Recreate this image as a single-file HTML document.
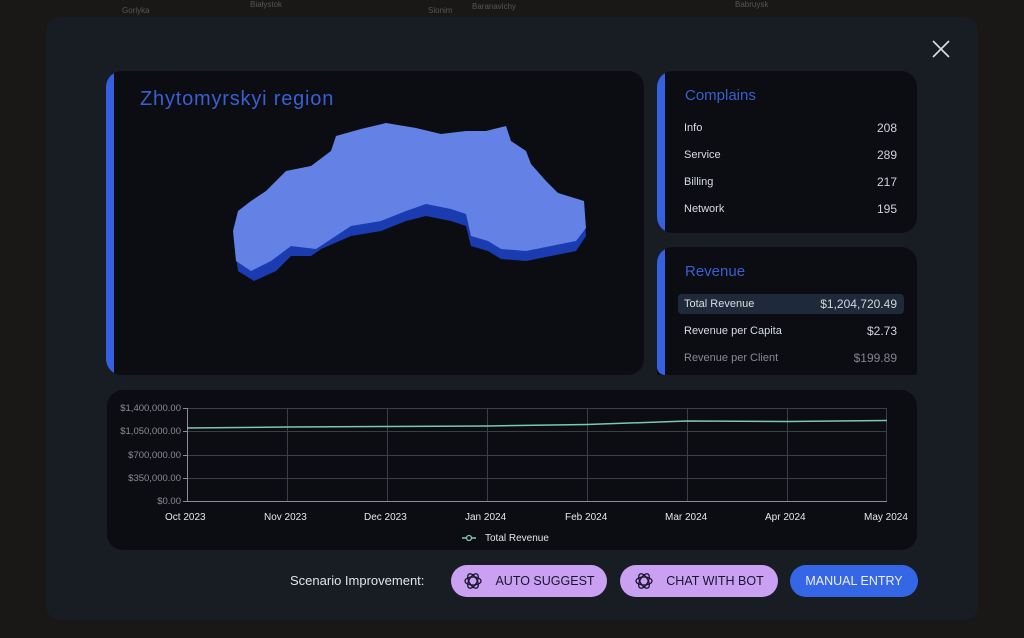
<!DOCTYPE html>
<html><head><meta charset="utf-8"><style>
*{margin:0;padding:0;box-sizing:border-box}
body{width:1024px;height:638px;overflow:hidden;background:#1a1817;font-family:"Liberation Sans",sans-serif;position:relative}
.bgt{position:absolute;color:#555;font-size:8px}
.modal{position:absolute;left:46px;top:17px;width:932px;height:603px;background:#181c23;border-radius:14px}
.card{position:absolute;background:#0b0d12;border-radius:16px;overflow:hidden}
.card .bar{position:absolute;left:0;top:0;bottom:0;width:8px;background:#3561e0;border-radius:16px 0 0 16px}
.title{position:absolute;color:#3a5fd0;font-size:17px}
.row{position:absolute;left:27px;right:20px;font-size:11px;color:#d8dce4;display:flex;justify-content:space-between;align-items:center;height:16px}
.row b{font-weight:normal;font-size:12px;color:#cfd3da}
.btn{position:absolute;top:565px;height:32px;border-radius:16px;font-size:12.5px;display:flex;align-items:center;justify-content:center;color:#1b1430}
.lab{position:absolute;font-size:10px;color:#e6e6e6}
.yl{position:absolute;font-size:9.5px;color:#8a8d94;text-align:right;width:80px}
</style></head><body>
<div class="bgt" style="left:122px;top:6px">Gorlyka</div>
<div class="bgt" style="left:250px;top:0">Białystok</div>
<div class="bgt" style="left:428px;top:6px">Slonim</div>
<div class="bgt" style="left:472px;top:2px">Baranavichy</div>
<div class="bgt" style="left:735px;top:0">Babruysk</div>
<div class="modal"></div>
<svg style="position:absolute;left:931px;top:40px" width="20" height="18"><path d="M2 1L18 17M18 1L2 17" stroke="#ddd" stroke-width="1.6"/></svg>

<div class="card" style="left:106px;top:71px;width:538px;height:304px">
<div class="bar"></div>
<div class="title" style="left:34px;top:17px;font-size:20px;letter-spacing:0.8px">Zhytomyrskyi region</div>
<svg style="position:absolute;left:0;top:0" width="538" height="304">
<path d="M128 170 L132 200 L148 210 L170 200 L185 185 L205 185 L215 178 L245 165 L275 160 L300 150 L320 145 L345 150 L360 155 L365 175 L382 180 L395 188 L420 190 L470 180 L480 165 L478 140 L452 135 L430 125 L420 108 L400 100 L350 100 L260 108 L200 118 L160 135 L138 150 Z" fill="#1a3cb0"/>
<path d="M127 160 L130 190 L145 200 L165 190 L185 175 L210 178 L245 155 L275 150 L300 140 L320 133 L345 138 L360 143 L365 165 L382 170 L395 178 L420 180 L470 170 L480 157 L478 130 L452 122 L440 110 L425 93 L420 80 L405 70 L400 55 L380 60 L360 60 L335 63 L310 57 L280 52 L255 58 L230 65 L225 80 L205 95 L180 100 L170 110 L160 120 L145 130 L132 140 Z" fill="#6482e6"/>
</svg>
</div>

<div class="card" style="left:657px;top:71px;width:260px;height:162px">
<div class="bar"></div>
<div class="title" style="left:28px;top:16px;font-size:15px">Complains</div>
<div class="row" style="top:49px">Info<b>208</b></div>
<div class="row" style="top:76px">Service<b>289</b></div>
<div class="row" style="top:103px">Billing<b>217</b></div>
<div class="row" style="top:130px">Network<b>195</b></div>
</div>

<div class="card" style="left:657px;top:247px;width:260px;height:128px;border-radius:16px 16px 0 0">
<div class="bar"></div>
<div class="title" style="left:28px;top:16px;font-size:15px">Revenue</div>
<div style="position:absolute;left:21px;top:47px;width:226px;height:20px;background:#1e2a3a;border-radius:4px"></div>
<div class="row" style="top:49px">Total Revenue<b>$1,204,720.49</b></div>
<div class="row" style="top:76px">Revenue per Capita<b>$2.73</b></div>
<div class="row" style="top:103px;opacity:.6">Revenue per Client<b>$199.89</b></div>
</div>

<div class="card" style="left:107px;top:390px;width:810px;height:160px"></div>
<svg style="position:absolute;left:0;top:0" width="1024" height="638">
<g stroke="#3a3e46" stroke-width="1">
<line x1="187" y1="408.5" x2="887" y2="408.5"/><line x1="187" y1="431.5" x2="887" y2="431.5"/><line x1="187" y1="455.5" x2="887" y2="455.5"/><line x1="187" y1="478.5" x2="887" y2="478.5"/>
<line x1="287.5" y1="408" x2="287.5" y2="501"/><line x1="387.5" y1="408" x2="387.5" y2="501"/><line x1="487.5" y1="408" x2="487.5" y2="501"/><line x1="587.5" y1="408" x2="587.5" y2="501"/><line x1="687.5" y1="408" x2="687.5" y2="501"/><line x1="787.5" y1="408" x2="787.5" y2="501"/><line x1="886.5" y1="408" x2="886.5" y2="501"/>
</g>
<g stroke="#8a8d94"><line x1="187.5" y1="408" x2="187.5" y2="502"/><line x1="187" y1="501.5" x2="887" y2="501.5"/>
<line x1="183" y1="408.5" x2="187" y2="408.5"/><line x1="183" y1="431.5" x2="187" y2="431.5"/><line x1="183" y1="455.5" x2="187" y2="455.5"/><line x1="183" y1="478.5" x2="187" y2="478.5"/><line x1="183" y1="501.5" x2="187" y2="501.5"/></g>
<path d="M187 428 L287 427 L387 426.5 L487 426 L587 424.5 L687 421 L787 421.5 L887 420.5" fill="none" stroke="#7fc8b0" stroke-width="1.5"/>
<line x1="462" y1="538" x2="476" y2="538" stroke="#7fc8b0" stroke-width="1.5"/><circle cx="469" cy="538" r="2.5" fill="#0b0d12" stroke="#7fc8b0" stroke-width="1.3"/>
</svg>
<div class="yl" style="left:101px;top:403px">$1,400,000.00</div>
<div class="yl" style="left:101px;top:426px">$1,050,000.00</div>
<div class="yl" style="left:101px;top:450px">$700,000.00</div>
<div class="yl" style="left:101px;top:473px">$350,000.00</div>
<div class="yl" style="left:101px;top:496px">$0.00</div>
<div class="lab" style="left:165px;top:512px">Oct 2023</div>
<div class="lab" style="left:264px;top:512px">Nov 2023</div>
<div class="lab" style="left:364px;top:512px">Dec 2023</div>
<div class="lab" style="left:465px;top:512px">Jan 2024</div>
<div class="lab" style="left:565px;top:512px">Feb 2024</div>
<div class="lab" style="left:665px;top:512px">Mar 2024</div>
<div class="lab" style="left:765px;top:512px">Apr 2024</div>
<div class="lab" style="left:864px;top:512px">May 2024</div>
<div class="lab" style="left:485px;top:533px">Total Revenue</div>

<div style="position:absolute;left:290px;top:573px;font-size:13px;color:#e4e4e4">Scenario Improvement:</div>
<div class="btn" style="left:451px;width:156px;background:#c9a0f2"><svg width="20" height="20" viewBox="0 0 20 20" style="margin-right:12px"><g fill="none" stroke="#1b1430" stroke-width="1.3"><ellipse cx="10" cy="10" rx="8" ry="4" /><ellipse cx="10" cy="10" rx="8" ry="4" transform="rotate(60 10 10)"/><ellipse cx="10" cy="10" rx="8" ry="4" transform="rotate(120 10 10)"/></g></svg>AUTO SUGGEST</div>
<div class="btn" style="left:620px;width:158px;background:#c9a0f2"><svg width="20" height="20" viewBox="0 0 20 20" style="margin-right:12px"><g fill="none" stroke="#1b1430" stroke-width="1.3"><ellipse cx="10" cy="10" rx="8" ry="4" /><ellipse cx="10" cy="10" rx="8" ry="4" transform="rotate(60 10 10)"/><ellipse cx="10" cy="10" rx="8" ry="4" transform="rotate(120 10 10)"/></g></svg>CHAT WITH BOT</div>
<div class="btn" style="left:790px;width:128px;background:#3466e6;color:#eef"><span>MANUAL ENTRY</span></div>
</body></html>
